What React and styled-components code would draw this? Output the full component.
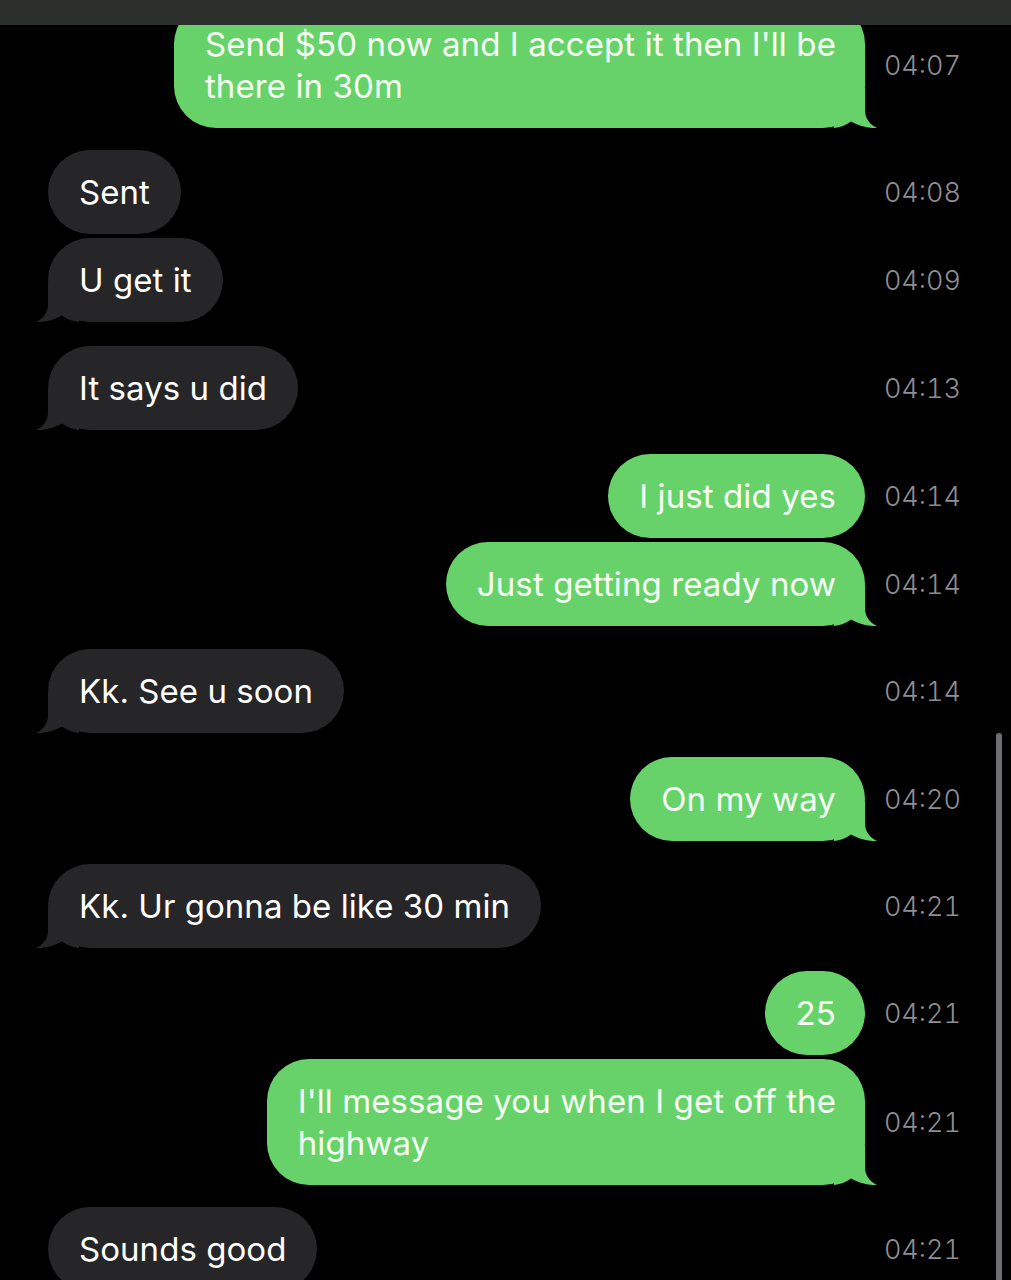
import React from "react";
import styled, { createGlobalStyle } from "styled-components";

const Global = createGlobalStyle`
  html, body { margin: 0; padding: 0; background: #000; overflow: hidden; }
  body { font-family: Inter, "Noto Sans", "Liberation Sans", sans-serif; }
`;

const Screen = styled.div`
  position: relative;
  height: 1280px;
  overflow: hidden;
  background: #000;
`;

const TopBar = styled.div`
  position: absolute;
  top: 0;
  left: 0;
  right: 0;
  height: 25px;
  background: #2a2f2b;
  z-index: 5;
`;

const Thread = styled.div`
  display: flex;
  flex-direction: column;
  padding-top: 2px;
`;

const Row = styled.div`
  display: flex;
  align-items: center;
  padding: 0 50px 0 48px;
  margin-top: ${(p) => p.$space}px;
`;

const BubbleArea = styled.div`
  flex: 1;
  display: flex;
  justify-content: ${(p) => (p.$me ? "flex-end" : "flex-start")};
`;

const Bubble = styled.div`
  position: relative;
  background: ${(p) => (p.$me ? "#68d26a" : "#262628")};
  color: ${(p) => (p.$me ? "#f6fff4" : "#ffffff")};
  font-size: 33px;
  line-height: 42px;
  padding: 21px ${(p) => (p.$me ? "29px 21px 31px" : "31px")};
  border-radius: 42px;
  white-space: pre;
  letter-spacing: ${(p) => (p.$me ? "0.1px" : "0.05px")};
`;

const Tail = styled.svg`
  position: absolute;
  bottom: 0;
  width: 44px;
  height: 40px;
  ${(p) =>
    p.$me
      ? "right: -13px;"
      : "left: -13px; transform: scaleX(-1);"}
`;

const Time = styled.div`
  width: 96px;
  flex: none;
  text-align: right;
  color: #8e8e92;
  font-size: 27px;
  font-weight: 300;
  letter-spacing: 0;
  font-variant-numeric: tabular-nums;
`;

const ScrollThumb = styled.div`
  position: absolute;
  right: 9px;
  top: 733px;
  width: 6px;
  height: 560px;
  border-radius: 3px;
  background: #6e6e70;
`;

const messages = [
  { me: true, text: "Send $50 now and I accept it then I'll be\nthere in 30m", time: "04:07", tail: true, space: 0 },
  { me: false, text: "Sent", time: "04:08", tail: false, space: 22 },
  { me: false, text: "U get it", time: "04:09", tail: true, space: 4 },
  { me: false, text: "It says u did", time: "04:13", tail: true, space: 24 },
  { me: true, text: "I just did yes", time: "04:14", tail: false, space: 24 },
  { me: true, text: "Just getting ready now", time: "04:14", tail: true, space: 4 },
  { me: false, text: "Kk. See u soon", time: "04:14", tail: true, space: 23 },
  { me: true, text: "On my way", time: "04:20", tail: true, space: 24 },
  { me: false, text: "Kk. Ur gonna be like 30 min", time: "04:21", tail: true, space: 23 },
  { me: true, text: "25", time: "04:21", tail: false, space: 23 },
  { me: true, text: "I'll message you when I get off the\nhighway", time: "04:21", tail: true, space: 4 },
  { me: false, text: "Sounds good", time: "04:21", tail: false, space: 22 },
];

function BubbleTail({ me }) {
  return (
    <Tail $me={me} viewBox="0 0 44 40" aria-hidden="true">
      <path
        d="M0 0 H31 V22 C31 30 35 36 43 40 C34 40.5 25 38 17 33.5 C12 37 6 39.6 0 40 Z"
        fill={me ? "#68d26a" : "#262628"}
      />
    </Tail>
  );
}

export default function App() {
  return (
    <Screen>
      <Global />
      <TopBar />
      <Thread>
        {messages.map((m, i) => (
          <Row key={i} $space={m.space}>
            <BubbleArea $me={m.me}>
              <Bubble $me={m.me}>
                {m.text}
                {m.tail && <BubbleTail me={m.me} />}
              </Bubble>
            </BubbleArea>
            <Time>{m.time}</Time>
          </Row>
        ))}
      </Thread>
      <ScrollThumb />
    </Screen>
  );
}
